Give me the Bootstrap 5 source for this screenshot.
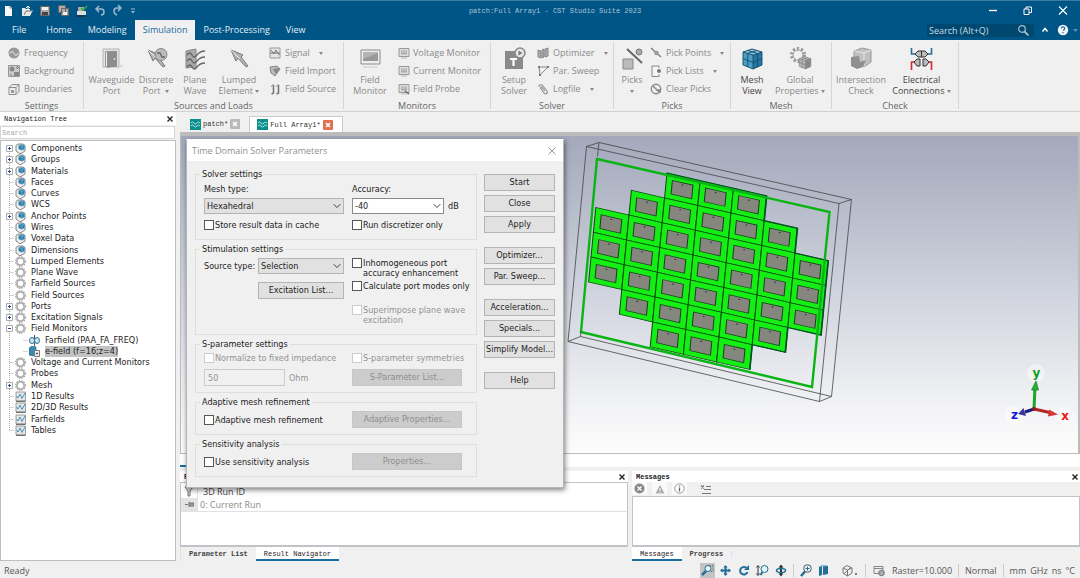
<!DOCTYPE html>
<html lang="en">
<head>
<meta charset="utf-8">
<meta name="viewport" content="width=device-width, initial-scale=1">
<title>patch:Full Array1 - CST Studio Suite 2023</title>
<link href="https://cdn.jsdelivr.net/npm/bootstrap@5.3.0/dist/css/bootstrap.min.css" rel="stylesheet">
<style>
:root{--ui:"Open Sans","Noto Sans",sans-serif;--tahoma:"DejaVu Sans Condensed","DejaVu Sans",sans-serif;--sim:"Liberation Mono",monospace;--blue:#005587}
body{font:9px/12px var(--ui);background:#f0f0f0;color:#444;height:100vh;overflow:hidden}
button,input,select{font:inherit;color:inherit}
button{background:none;border:0;padding:0}
svg{display:block;flex:none}
.i12{width:12px;height:12px}
.i22{width:23px;height:23px}
.mono{font:7px/10px var(--sim)}
.topbar{background:var(--blue);color:#fff;border-top:1px solid #3c7ba3}
.titlerow{height:19px}
.doc-title{color:#a9c4d6;width:230px;padding-left:30px}
.winbtns{gap:24px;padding-right:5px}
.tabrow{height:20px}
.rtab{padding:0 8px;line-height:20px;color:#e4eef4;text-decoration:none}
.rtab.active{background:#f0f0f0;color:#1a6a9c}
.rsearch{width:107px;height:13px;background:#00486f}
.rsearch input{background:none;border:0;color:#c6dbe8;padding:0 2px;width:90px;height:13px}
.rsearch input::placeholder{color:#c6dbe8;opacity:1}
.ribbon{height:72px;border-bottom:1px solid #d0d0d0;background:#f0f0f0;color:#8a8a8a}
.rgroup{border-right:1px solid #d6d6d6;margin:2px 0}
.rgroup .items{height:58px;padding-top:2px;align-items:flex-start}
.rgroup .caption{line-height:12px;text-align:center;color:#666}
.big{line-height:11px;white-space:nowrap;color:inherit}
.big svg{margin:3px auto 4px}
.small-btn{height:18px;color:inherit;white-space:nowrap}
.on{color:#444}
.caret{display:inline-block;border:2px solid transparent;border-top:3px solid #888;border-bottom:0;vertical-align:middle}
.small-btn .caret{margin-left:5px}
.workspace{min-height:0}
.nav-side{width:176px;background:#f0f0f0}
.phead{height:13px;background:#fff;color:#222}
.tree{background:#fff;border:1px solid #bdbdc2;font:9px/11px var(--tahoma);color:#222;margin-top:1px}
.tree-search{height:13px;border:1px solid #d6d6d6;background:#fff;width:175px;padding:0 1px;margin-top:1px}
.tree-search::placeholder{color:#aaa;opacity:1}
.tree ul{height:293px;margin:2px 0 0;position:relative}
.tree li{flex:1 1 0;min-height:0;padding-left:4px}
.tree .tw{width:9px;height:9px;margin-right:1px}
.tree .ic{width:11px;height:11px;margin-right:5px}
.tree .sub{padding-left:18px}
.tree .selrow span{background:#c3c3c3}
.trunk{border-left:1px dotted #aaa;position:absolute;left:8px;top:6px;bottom:6px}
.main{min-width:0}
.dtabs{height:20px;padding:4px 0 0 6px}
.dtab{height:16px;padding:0 9px 0 7px;gap:2px;color:#333}
.dtab.active{background:#fff;border:1px solid #ccc;border-bottom:0}
.dtab svg{width:11px;height:11px}
.x{width:10px;height:10px;border-radius:1px;background:#b9b9b9}
.x.red{background:#e07050}
.view3d{height:322px;border:solid #bcbcbc;border-width:4px 2px 1px 1px;background:linear-gradient(#a3a9bb,#c9cdd9 42%,#eff0f3 82%,#fdfdfd)}
.viewtabs{height:13px;background:#fff;margin-bottom:4px}
.viewtabs span{display:block;width:60px;height:100%;border-bottom:2px solid #1b6f9f}
.outputs{gap:4px}
.outbox{background:#fff;border:2px solid #c2c3c9;border-width:1px 1px 2px}
.btab{height:14px;line-height:14px;padding:0 8px;color:#444;font-size:7px;font-family:var(--sim);font-weight:bold}
.btab.active{background:#fff;border-bottom:2px solid #1b6f9f;font-weight:normal;color:#222}
.filtercol{width:17px}
.statusbar{height:17px;color:#555;padding:2px 5px 0 4px}
.statusbar .sep{border-left:1px solid #ccc;height:13px}
.mtool{width:15px;height:13px;background:#fafafa}
.solver{position:absolute;left:186px;top:139px;width:378px;background:#f0f0f0;box-shadow:1px 2px 5px rgba(0,0,0,.5);font:9px/12px var(--tahoma);color:#222;border:1px solid #b5b5b8;border-top-color:#fff}
.solver .bar{height:21px;background:#fff;color:#909090;font:9px/20px var(--ui);padding:0 7px 0 5px}
.solver .cols{padding:7px 8px 10px}
.solver fieldset{border:1px solid #dedede;width:282px;padding:0 8px 6px;margin:0 0 3px;min-width:0}
.solver fieldset.roomy{padding-bottom:9px}
.solver legend{float:none;width:auto;font-size:9px;line-height:12px;margin:0 0 0 -4px;padding:0 2px}
.two{display:grid;grid-template-columns:140px 1fr;column-gap:8px}
.pb{height:17px;border:1px solid #b4b4b4;background:#e1e1e1;color:#222;text-align:center;line-height:13px;width:71px}
.pb.w{width:86px}.pb.d{width:110px;background:#cccccc;border-color:#c6c6c6;color:#8e8e8e}
.pbs{padding-top:6px}
.pb.last{margin-bottom:10px}
.solver .form-select{height:16px;border-radius:0;padding:0 14px 0 2px;font-size:9px;line-height:14px;border:1px solid #b4b4b4;background-color:#e1e1e1;background-size:8px;background-position:right 2px center;color:#222}
.solver .form-select.white{background-color:#fff;border-color:#8a8a8a}
.ck{margin:0;padding:0;min-height:0;display:flex;align-items:center;line-height:10px;gap:1px;white-space:nowrap}
.ck .form-check-input{float:none;margin:0;width:10px;height:10px;border-radius:0;border:1px solid #555;flex:none}
.ck .form-check-input:disabled{opacity:1;border-color:#ccc}
.ck .form-check-input:disabled~.form-check-label,.off{opacity:1;color:#939393}
.imp{width:81px;height:17px;border:1px solid #ccc;background:#f0f0f0;color:#939393;padding:0 3px}
.g12{padding-top:3px}
.gapped{padding-top:14px}
</style>
</head>
<body class="d-flex flex-column">
<svg width="0" height="0" class="position-absolute" aria-hidden="true">
<defs>
<symbol id="cube" viewBox="0 0 11 11"><path d="M1 2.500 3 1h5l2 1.500V8L6 10.500H4.500L1 8z" fill="#eee" stroke="#777" stroke-width=".9"/><path d="M3.500 2.500 6 1.500l3.500.5v4L7 7.500 3.500 6z" fill="#2a80ab"/><path d="M3.500 2.500 7 3.200l2.500-1M7 3.200v4" stroke="#8cc5e0" stroke-width=".6" fill="none"/></symbol>
<symbol id="gear" viewBox="0 0 11 11"><circle cx="5.500" cy="5.500" r="4.700" fill="none" stroke="#8f8f8f" stroke-width="1.200" stroke-dasharray="1.400 1.060"/><circle cx="5.500" cy="5.500" r="3.600" fill="#fff" stroke="#b0b0b0" stroke-width="1.700"/></symbol>
<symbol id="plot" viewBox="0 0 11 11"><path d="M1 1h9.500v9H1z" fill="#e6e9ea" stroke="#888" stroke-width=".8"/><path d="M1.500 5 3 7l2-4 2 4.500L10 2" fill="none" stroke="#3b88ae" stroke-width=".9"/><path d="M1 10.300h9.500" stroke="#555"/></symbol>
<symbol id="plus" viewBox="0 0 9 9"><path d="M1.500 1.500h6v6h-6z" fill="#fff" stroke="#aaa"/><path d="M3 4.500h3M4.500 3v3" stroke="#2a4a9a"/></symbol>
<symbol id="minus" viewBox="0 0 9 9"><path d="M1.500 1.500h6v6h-6z" fill="#fff" stroke="#aaa"/><path d="M3 4.500h3" stroke="#2a4a9a"/></symbol>
<symbol id="stub" viewBox="0 0 9 9"><path d="M4.500 4.500H9" stroke="#aaa" stroke-dasharray="1 1"/></symbol>
<symbol id="cst" viewBox="0 0 11 11"><path d="M0 0h11v11H0z" fill="#0b8d8c"/><path d="M1 4q1.500-2 3 0t3 0 3 0M1 7q1.500-2 3 0t3 0 3 0" fill="none" stroke="#c9ecea" stroke-width=".9"/></symbol>
<symbol id="xx" viewBox="0 0 10 10"><path d="M3 3l4 4M7 3 3 7" stroke="#fff" stroke-width="1.600"/></symbol>
<symbol id="close" viewBox="0 0 8 8"><path d="M1.500 1.500l5 5M6.500 1.500l-5 5" stroke="#222" stroke-width="1.400"/></symbol>
<symbol id="arrow" viewBox="0 0 23 23"><path d="M3 3l5 11 2-3 8 9 2-1-7-9 2-2z" fill="#b5b5b5" stroke="#777"/><path d="M3 3l9 9" stroke="#eee"/></symbol>
<symbol id="mon" viewBox="0 0 12 12"><path d="M1 1.500h10v8H1z" fill="#ddd" stroke="#999"/><path d="M3 3.500h6v4H3z" fill="#aaa"/><path d="M3.500 6l2-1.500 1 1 2-1" fill="none" stroke="#eee" stroke-width=".7"/><path d="M3 11h6" stroke="#bbb"/></symbol>
<symbol id="bigcube" viewBox="0 0 23 23"><path d="M2 5l9-3 10 3v13l-9 4-10-4z" fill="var(--a)"/><path d="M2 5l10 3 9-3-10-3z" fill="var(--c)"/><path d="M12 8l9-3v13l-9 4z" fill="var(--b)"/><path d="M2 5l10 3v14M12 8l9-3M2 11.500l10 4 9-4M6.700 6.500V20M16.500 6.500V20M6.500 3.500l10 3M16 3.500l-9.500 3M2 5v13l10 4 9-4V5l-10-3z" fill="none" stroke="var(--s)" stroke-width=".9"/></symbol>
</defs></svg>

<header class="topbar">
 <div class="titlerow d-flex align-items-center position-relative">
  <svg width="135" height="16" viewBox="0 0 135 16" class="ms-1" aria-hidden="true">
   <path d="M1 3h5l2 2v8H1z" fill="#f7f7f7"/><path d="M6 3v2h2" fill="none" stroke="#888"/>
   <path d="M18 5h3l1 1h4v2l3-1-3 6h-8z" fill="#e8e8e8"/><path d="M24 7V3m-2 2 2-2 2 2" stroke="#fff" fill="none"/><path d="M20 12l2-4h7" stroke="#777" fill="none"/>
   <path d="M36.500 3.500h9v9h-9z" fill="#aaa" stroke="#666"/><path d="M38 4h6v3h-6z" fill="#eee"/><path d="M38 9h6v3h-6z" fill="#444"/>
   <path d="M54.500 2.500h7v7h-7zM57.500 5.500h7v7h-7z" fill="#aaa" stroke="#666"/><path d="M59 9h4v3h-4z" fill="#eee"/>
   <path d="M73 8h9v4h-9z" fill="#ddd"/><path d="M74 4h6v4h-6z" fill="#aaa"/><path d="M72 13h10" stroke="#222"/><path d="M77 5l2 2 4-4" fill="none" stroke="#2faa3c" stroke-width="1.600"/>
   <path d="M93 6h4q3 0 3 3t-3 3M95 3l-3 3 3 3" fill="none" stroke="#9db9ca" stroke-width="1.500"/>
   <path d="M116 5h-3q-3 0-3 3t3 4M114 2l3 3-3 3" fill="none" stroke="#9db9ca" stroke-width="1.500"/>
   <path d="M127 6h4" stroke="#9db9ca"/><path d="M127 8h4l-2 2.500z" fill="#9db9ca"/>
  </svg>
  <div class="mono doc-title text-center position-absolute start-50 translate-middle-x">patch:Full Array1 - CST Studio Suite 2023</div>
  <div class="ms-auto d-flex winbtns">
   <button aria-label="Minimize"><svg width="11" height="11"><path d="M2 5.500h8" stroke="#fff" stroke-width="1.400"/></svg></button>
   <button aria-label="Restore"><svg width="11" height="11"><path d="M2 4h5v5.500H2zM4 4V2h5.500v5.500H7" fill="none" stroke="#fff"/></svg></button>
   <button aria-label="Close"><svg width="18" height="11"><path d="M2 1.500l8 8M10 1.500l-8 8" stroke="#fff" stroke-width="1.100"/></svg></button>
  </div>
 </div>
 <nav class="tabrow d-flex align-items-center">
  <a class="rtab ms-1 me-1" href="#">File</a><a class="rtab" href="#">Home</a><a class="rtab" href="#">Modeling</a><a class="rtab active" href="#">Simulation</a><a class="rtab" href="#">Post-Processing</a><a class="rtab" href="#">View</a>
  <div class="rsearch d-flex align-items-center ms-auto"><input type="text" aria-label="Search" placeholder="Search (Alt+Q)"><svg width="12" height="12"><circle cx="5" cy="5" r="3.300" fill="none" stroke="#a9bfcc" stroke-width="1.200"/><path d="M7.500 7.500l4 4" stroke="#a9bfcc" stroke-width="1.800"/></svg></div>
  <svg width="46" height="14" aria-hidden="true"><path d="M8.500 8.500l2.500-3 2.500 3" fill="none" stroke="#fff" stroke-width="1.500"/><circle cx="29" cy="7" r="5.200" fill="#f3f6f8"/><path d="M27.300 5.500q0-1.700 1.700-1.700t1.700 1.500-1.700 2.200M29 9v1.300" fill="none" stroke="#1a6a9c" stroke-width="1.200"/><path d="M39 6h5l-2.500 3z" fill="#5d90b0"/></svg>
 </nav>
</header>

<section class="ribbon d-flex" aria-label="Simulation ribbon">
 <div class="rgroup" style="width:84px"><div class="items ps-2">
  <button class="small-btn d-flex align-items-center gap-1"><svg class="i12"><circle cx="6" cy="6" r="5.500" fill="#999"/><path d="M2 6.500q2-4 4 0t4-.5" fill="none" stroke="#e8e8e8"/></svg>Frequency</button>
  <button class="small-btn d-flex align-items-center gap-1"><svg class="i12"><path d="M.5.5h11v11H.5z" fill="#ccc" stroke="#999"/><circle cx="4" cy="4" r="2.500" fill="#888"/><path d="M6 7h5v4H6z" fill="#888"/><path d="M8 2l2 2M2 9l2 2M9 1l2 2" stroke="#777"/></svg>Background</button>
  <button class="small-btn d-flex align-items-center gap-1"><svg class="i12"><path d="M1 4.500h7v7H1zM1 4.500l3-3h7v7l-3 3M8 4.500l3-3" fill="#eee" stroke="#8d8d8d"/><path d="M3 7h3v3H3z" fill="#999"/></svg>Boundaries</button>
 </div><div class="caption">Settings</div></div>

 <div class="rgroup" style="width:260px"><div class="items d-flex" style="padding-left:4px">
  <button class="big" style="width:47px"><svg class="i22"><path d="M3 2h16v18H3z" fill="#e4e4e4" stroke="#b5b5b5"/><path d="M5.500 4.500h11v15h-11z" fill="#eee" stroke="#999"/><path d="M7 5l10-1v15L7 21z" fill="#8d8d8d"/><circle cx="14.500" cy="12" r="1" fill="#ddd"/><path d="M18 21l5-3" stroke="#d8d8d8" stroke-width="2"/></svg>Waveguide<br>Port</button>
  <button class="big" style="width:42px"><svg class="i22"><use href="#arrow"/><circle cx="16" cy="7.500" r="6" fill="#bbb" stroke="#888"/><path d="M12 6h3l2 4h3" fill="none" stroke="#666" stroke-width="1.300"/></svg>Discrete<br>Port&nbsp; <i class="caret"></i></button>
  <button class="big" style="width:36px"><svg class="i22"><path d="M2 4l10-2v18L2 21z" fill="#aaa" stroke="#888"/><path d="M3 8q3-4 5 0t5 0 8-4M3 14q3-4 5 0t5 0 8-4M3 20q3-4 5 0t5 0 8-4" fill="none" stroke="#666" stroke-width="1.300"/></svg>Plane<br>Wave</button>
  <button class="big" style="width:52px"><svg class="i22"><use href="#arrow"/></svg>Lumped<br>Element <i class="caret"></i></button>
  <div class="ps-1">
   <button class="small-btn d-flex align-items-center gap-1"><svg class="i12"><path d="M1 1h10v10H1z" fill="#e4e4e4" stroke="#999"/><path d="M2 3l3 4 2-4 3 5M1 6h10" fill="none" stroke="#777"/></svg>Signal <i class="caret"></i></button>
   <button class="small-btn d-flex align-items-center gap-1"><svg class="i12"><path d="M1 2l7-1 3 3-5 7-4-3z" fill="#bbb" stroke="#888"/><path d="M4 4l7-1-4 6z" fill="#888"/></svg>Field Import</button>
   <button class="small-btn d-flex align-items-center gap-1"><svg class="i12"><path d="M4.500 2v8l-2 1M9.500 2v8l-2 1" fill="none" stroke="#777" stroke-width="1.600"/><path d="M2 4l2.500-3M7 4l2.500-3" stroke="#999"/></svg>Field Source</button>
  </div>
 </div><div class="caption">Sources and Loads</div></div>

 <div class="rgroup" style="width:147px"><div class="items d-flex" style="padding-left:5px">
  <button class="big" style="width:42px"><svg class="i22"><path d="M2 3h19v14H2z" fill="#eee" stroke="#8a8a8a"/><path d="M4 5h15v9H4z" fill="#b5b5b5"/><path d="M4 12 19 6v8H4z" fill="#999"/><path d="M4 20h15" stroke="#ddd" stroke-width="2"/></svg>Field<br>Monitor</button>
  <div style="padding-left:7px">
   <button class="small-btn d-flex align-items-center" style="gap:3px"><svg class="i12"><use href="#mon"/></svg>Voltage Monitor</button>
   <button class="small-btn d-flex align-items-center" style="gap:3px"><svg class="i12"><use href="#mon"/></svg>Current Monitor</button>
   <button class="small-btn d-flex align-items-center" style="gap:3px"><svg class="i12"><use href="#mon"/><path d="M7 8l4 3" stroke="#666" stroke-width="1.500"/></svg>Field Probe</button>
  </div>
 </div><div class="caption">Monitors</div></div>

 <div class="rgroup" style="width:123px"><div class="items d-flex">
  <button class="big" style="width:46px"><svg class="i22"><path d="M2 4h18v18H2z" fill="#8a8a8a"/><path d="M7 12h7M10.500 12v7" stroke="#fff" stroke-width="2.200"/><circle cx="17" cy="6" r="5" fill="#e8e8e8" stroke="#888" stroke-width="1.500"/><path d="M15.500 3.500l4 2.500-4 2.500z" fill="#777"/></svg>Setup<br>Solver</button>
  <div>
   <button class="small-btn d-flex align-items-center gap-1"><svg class="i12"><path d="M1 3l3 1v7l-3-1zM5 3l2-1v8l-2 1zM8 2l3-1v8l-3 1z" fill="#aaa" stroke="#888"/></svg>Optimizer <i class="caret"></i></button>
   <button class="small-btn d-flex align-items-center gap-1"><svg class="i12"><path d="M2 2h9L3 10z" fill="none" stroke="#888"/><path d="M1 1h2v2H1zM10 1h2v2h-2zM2 9h2v2H2z" fill="#777"/></svg>Par. Sweep</button>
   <button class="small-btn d-flex align-items-center gap-1"><svg class="i12"><path d="M2 4q0-3 3-2l5 6q1 2-1 3-1 0-2-1L3.500 5l1-1 3.500 4" fill="none" stroke="#8a8a8a" stroke-width="1.100"/></svg>Logfile <i class="caret"></i></button>
  </div>
 </div><div class="caption">Solver</div></div>

 <div class="rgroup" style="width:117px"><div class="items d-flex">
  <button class="big" style="width:36px"><svg class="i22"><path d="M6 2l15 14" stroke="#666" stroke-width="2"/><circle cx="18" cy="5" r="3" fill="#aaa" stroke="#777"/><path d="M2 12h10v10H2z" fill="#bbb" stroke="#888"/></svg>Picks<br><i class="caret"></i></button>
  <div>
   <button class="small-btn d-flex align-items-center gap-1"><svg class="i12"><path d="M1 1l10 9" stroke="#777" stroke-width="1.200"/><circle cx="6.500" cy="6" r="2.300" fill="#999"/></svg>Pick Points <i class="caret"></i></button>
   <button class="small-btn d-flex align-items-center gap-1"><svg class="i12"><path d="M2 1h7v10.500H2z" fill="#f5f5f5" stroke="#888"/><path d="M9 3v6" stroke="#fff" stroke-width="2"/><circle cx="9" cy="6" r="2" fill="#777"/></svg>Pick Lists <i class="caret"></i></button>
   <button class="small-btn d-flex align-items-center gap-1"><svg class="i12"><circle cx="6" cy="6" r="4.700" fill="#eee" stroke="#888" stroke-width="1.400"/><path d="M3 3l6 6M6 7h4v3" stroke="#888" stroke-width="1.400" fill="none"/></svg>Clear Picks</button>
  </div>
 </div><div class="caption">Picks</div></div>

 <div class="rgroup" style="width:101px"><div class="items d-flex">
  <button class="big on" style="width:42px"><svg class="i22" style="--a:#4b9ec6;--b:#2477a3;--c:#8cc8e4;--s:#184d6b"><use href="#bigcube"/></svg>Mesh<br>View</button>
  <button class="big" style="width:54px"><svg class="i22" style="--a:#b5b5b5;--b:#8f8f8f;--c:#ccc;--s:#777"><circle cx="9" cy="8" r="6.500" fill="#f5f5f5" stroke="#999" stroke-width="3" stroke-dasharray="2.200 1.900"/><circle cx="9" cy="8" r="5" fill="#f0f0f0" stroke="#999"/><use href="#bigcube" x="9" y="8" width="14" height="15"/></svg>Global<br>Properties <i class="caret"></i></button>
 </div><div class="caption">Mesh</div></div>

 <div class="rgroup" style="width:127px"><div class="items d-flex">
  <button class="big" style="width:58px"><svg class="i22"><path d="M4 4l8-3 9 2v12l-7 5-10-3z" fill="#c0c0c0" stroke="#999"/><path d="M4 4l10 2 7-3M14 6v14" fill="none" stroke="#e8e8e8"/><path d="M1 10l8-1 1 6 6-2-3 7-6 2-6-3z" fill="#8f8f8f"/></svg>Intersection<br>Check</button>
  <button class="big on" style="width:63px"><svg class="i22"><path d="M1.500 1v6h5M21.500 1v6h-5" fill="none" stroke="#246f97" stroke-width="1.600"/><path d="M1.500 23v-8h5M21.500 23v-8h-5" fill="none" stroke="#cf2a2a" stroke-width="1.600"/><path d="M5 7l3-3h7l3 3-3 3H8zM4 15l3-3h3v7H7zM13 12h3l3 3-3 4h-3z" fill="#bbb" stroke="#333"/><path d="M11.500 4v6" stroke="#333"/></svg>Electrical<br>Connections <i class="caret"></i></button>
 </div><div class="caption">Check</div></div>
</section>

<div class="workspace d-flex flex-fill gap-1">
 <aside class="nav-side d-flex flex-column">
  <div class="phead d-flex align-items-center justify-content-between mono"><span class="ps-1">Navigation Tree</span><button aria-label="Close tree"><svg width="10" height="8"><use href="#close" width="8"/></svg></button></div>
  <input class="tree-search mono" type="text" aria-label="Search tree" placeholder="Search">
  <div class="tree flex-fill">
   <ul class="list-unstyled d-flex flex-column" id="tree"><li class="trunk p-0"></li></ul>
  </div>
 </aside>

 <main class="main d-flex flex-column flex-fill">
  <div class="dtabs d-flex align-items-end mono">
   <div class="dtab d-flex align-items-center ps-1"><svg><use href="#cst"/></svg><span>patch*</span><button class="x" aria-label="Close patch"><svg class="w-100 h-100"><use href="#xx"/></svg></button></div>
   <div class="dtab active d-flex align-items-center"><svg><use href="#cst"/></svg><span>Full Array1*</span><button class="x red" aria-label="Close Full Array1"><svg class="w-100 h-100"><use href="#xx"/></svg></button></div>
  </div>
  <div class="view3d">
   <svg width="100%" height="100%" viewBox="181 136 897 317" preserveAspectRatio="xMinYMin meet" role="img" aria-label="Patch array model">
    <defs>
     <g id="cell" stroke="#064d06" stroke-width=".03"><path d="M0 0h1v1H0z" fill="#14ee14"/><path d="M.18 .24h.62v.55H.18z" fill="#85877f" stroke="#1d3d1d"/><circle cx=".49" cy=".33" r=".025" fill="#222" stroke="none"/></g>
     <g id="r3"><use href="#cell" x="2"/><use href="#cell" x="3"/><use href="#cell" x="4"/></g>
     <g id="r5"><use href="#cell" x="1"/><use href="#r3"/><use href="#cell" x="5"/></g>
     <g id="r7"><use href="#cell" x="0"/><use href="#r5"/><use href="#cell" x="6"/></g>
    </defs>
    <g transform="matrix(33.2 7.6 -2.4 24.8 600.6 157.9)">
     <use href="#r3"/><use href="#r5" y="1"/><use href="#r7" y="2"/><use href="#r7" y="3"/><use href="#r7" y="4"/><use href="#r5" y="5"/><use href="#r3" y="6"/>
     <path d="M2 0h3v1h1v1h1v3H6v1H5v1" fill="none" stroke="#052" stroke-width=".05"/>
    </g>
    <path d="M597 159l232.500 53-17.500 175-231-55z" fill="none" stroke="#0ab414" stroke-width="2.400"/>
    <path d="M586.500 146.500 839 203.500l-19.500 198L568 341.500zM599 142.500l252.500 57-20 197L580.500 336.500l.5-5M586.500 146.500l12.500-4-1.500 14M839 203.500l12.500-4M819.500 401.500l12-5M568 341.500l12.500-5" fill="none" stroke="#444" stroke-width=".8"/>
    <g fill="#fff" opacity=".45"><circle cx="1036" cy="373" r="9"/><circle cx="1014" cy="415" r="9"/><circle cx="1065" cy="416" r="9"/></g>
    <path d="M1034 409l1-22" stroke="#1ba62a" stroke-width="3"/><path d="M1036 381l-4.500 9h7z" fill="#22b832" stroke="#175f1c" stroke-width=".6"/>
    <path d="M1034 409l18 4" stroke="#b22626" stroke-width="3"/><path d="M1058 414.500l-9-5-1 7z" fill="#d23a3a"/>
    <path d="M1034 409l-9 3" stroke="#1c1c80" stroke-width="3"/><path d="M1018 414l5.500-6 2.500 8z" fill="#35359a"/><circle cx="1034" cy="409" r="2" fill="#8b2020"/>
    <g font-family="DejaVu Sans" font-weight="bold" font-size="12" text-anchor="middle"><text x="1036.500" y="377" fill="#0a9e1c">y</text><text x="1014.500" y="419" fill="#1414dd">z</text><text x="1065" y="420" fill="#f01414">x</text></g>
   </svg>
  </div>
  <div class="viewtabs"><span></span></div>
  <div class="outputs d-flex flex-fill">
   <section class="d-flex flex-column" style="flex:448 1 0">
    <div class="phead d-flex align-items-center justify-content-between mono" style="height:11px"><b class="ps-1">Result</b><button aria-label="Close results"><svg width="10" height="8"><use href="#close" width="8"/></svg></button></div>
    <div class="outbox flex-fill">
     <div class="d-flex" style="height:15px;line-height:17px"><span class="filtercol border-end d-flex"><svg width="12" height="15" class="mx-auto"><path d="M2 4h8L7 8v5H5V8z" fill="#ddd" stroke="#777"/></svg></span><span style="padding-left:5px">3D Run ID</span></div>
     <div class="d-flex border-bottom" style="height:14px;line-height:14px;color:#8a8a8a"><span class="filtercol d-flex align-items-center justify-content-center" style="background:#e3e3e3"><svg width="9" height="7"><path d="M0 3.500h3M4 1v5M4 2h5v3H4" fill="#999" stroke="#777"/></svg></span><span style="padding-left:2px">0: Current Run</span></div>
    </div>
    <div class="d-flex"><div class="btab border-start">Parameter List</div><div class="btab active">Result Navigator</div></div>
   </section>
   <section class="d-flex flex-column" style="flex:448 1 0">
    <div class="phead d-flex align-items-center justify-content-between mono" style="height:11px"><b class="ps-1">Messages</b><button aria-label="Close messages"><svg width="10" height="8"><use href="#close"/></svg></button></div>
    <div class="d-flex" style="height:14px;gap:5px">
     <button class="mtool d-flex align-items-center justify-content-center" aria-label="Errors"><svg width="11" height="11"><circle cx="5.500" cy="5.500" r="5" fill="#888"/><path d="M3.500 3.500l4 4M7.500 3.500l-4 4" stroke="#fff" stroke-width="1.300"/></svg></button>
     <button class="mtool d-flex align-items-center justify-content-center" aria-label="Warnings"><svg width="10" height="10"><path d="M5 1l4.500 8.500h-9z" fill="#aaa"/><path d="M5 4v3M5 8v1" stroke="#fff"/></svg></button>
     <button class="mtool d-flex align-items-center justify-content-center" aria-label="Info"><svg width="11" height="11"><circle cx="5.500" cy="5.500" r="4.700" fill="#fff" stroke="#999"/><path d="M5.500 2.500v1M5.500 4.500v4" stroke="#666" stroke-width="1.300"/></svg></button>
     <button class="ms-2" aria-label="Clear messages"><svg width="12" height="11"><path d="M4 5.500h7M6 2.500h5M2 9.500h9M1 1.500l3 3M4 1.500l-3 3" stroke="#777" stroke-width="1.100"/></svg></button>
    </div>
    <div class="outbox flex-fill"></div>
    <div class="d-flex"><div class="btab active">Messages</div><div class="btab">Progress</div><div class="border-start my-1"></div></div>
   </section>
  </div>
 </main>
</div>

<footer class="statusbar d-flex align-items-center">
 <span>Ready</span>
 <div class="ms-auto d-flex align-items-center" style="gap:6px">
  <svg width="186" height="15" viewBox="0 0 186 15" aria-hidden="true">
   <path d="M0 0h15v15H0z" fill="#c3c3c3"/><path d="M2 12l4-4" stroke="#246f97" stroke-width="2.500"/><circle cx="8" cy="5.500" r="3" fill="#e6f2f8" stroke="#246f97"/><path d="M8 2.500h5v6h-3" fill="none" stroke="#555" stroke-dasharray="1 1"/>
   <path d="M21 7.500h9M25.500 3v9" stroke="#246f97" stroke-width="2.200"/><path d="M20 7.500l2.500-2v4zM31 7.500l-2.500-2v4zM25.500 2l-2 2.500h4zM25.500 13l-2-2.500h4z" fill="#246f97"/>
   <path d="M47 5.500A3.800 3.800 0 1 0 47.500 9" fill="none" stroke="#246f97" stroke-width="2"/><path d="M49 2v5h-5z" fill="#246f97"/>
   <path d="M58 3v9M56.500 4.500 58 2.500l1.500 2M56.500 10.500l1.500 2 1.500-2" fill="none" stroke="#333"/><circle cx="64.500" cy="6" r="3.500" fill="#e6f2f8" stroke="#246f97"/><path d="M60.500 12l2-3" stroke="#246f97" stroke-width="2"/>
   <path d="M81 1.500l2.500 3H82v6h1.500l-2.500 3-2.500-3H80v-6h-1.500z" fill="#333"/><ellipse cx="81" cy="7.500" rx="4.500" ry="2" fill="none" stroke="#246f97" stroke-width="1.500"/>
   <path d="M93.500 1v13" stroke="#ccc"/><path d="M101 13l4-4.500" stroke="#246f97" stroke-width="2.500"/><circle cx="107.500" cy="5.500" r="3.800" fill="#e6f2f8" stroke="#555"/><path d="M105.500 5.500h4M107.500 3.500v4" stroke="#246f97"/>
   <path d="M119 4l3-2v10l-3 1zM123 3h5v8l-5 1z" fill="#246f97"/><path d="M119 4l3-2h6l-3 1.500z" fill="#7fb8d4"/>
   <path d="M143 5l4-2.500L152 5v5l-4.500 3-4.500-3zM143 5l4.500 2L152 5M147.500 7v6M144 11l7-7" fill="none" stroke="#777"/><path d="M155 11h2" stroke="#555" stroke-width="1.500"/>
   <path d="M165.500 1v13" stroke="#ccc"/><path d="M174 3.500h9v7h-9zM174 5.500h9" fill="#eee" stroke="#888"/><circle cx="181.500" cy="10" r="2.800" fill="#aaa" stroke="#777"/>
  </svg>
  <span>Raster=10.000</span><span class="sep"></span><span>Normal</span><span class="sep"></span><span class="d-flex gap-1"><span>mm</span><span>GHz</span><span>ns</span><span>°C</span></span>
 </div>
</footer>

<form class="solver" aria-label="Time Domain Solver Parameters">
 <div class="bar d-flex align-items-center justify-content-between"><span>Time Domain Solver Parameters</span><button type="button" aria-label="Close dialog"><svg width="8" height="8"><path d="M.5.5l7 7M7.500.5l-7 7" stroke="#888" stroke-width=".9"/></svg></button></div>
 <div class="cols d-flex justify-content-between">
  <div>
   <fieldset class="roomy"><legend>Solver settings</legend>
    <div class="two g12" style="row-gap:3px">
     <label for="mt">Mesh type:</label><label for="acc">Accuracy:</label>
     <select class="form-select" id="mt"><option>Hexahedral</option></select>
     <div class="d-flex align-items-center gap-1"><select class="form-select white" id="acc" style="width:92px"><option>-40</option></select><span>dB</span></div>
     <div class="form-check ck g12"><input class="form-check-input" type="checkbox" id="c1"><label class="form-check-label" for="c1">Store result data in cache</label></div>
     <div class="form-check ck g12"><input class="form-check-input" type="checkbox" id="c2"><label class="form-check-label" for="c2">Run discretizer only</label></div>
    </div>
   </fieldset>
   <fieldset class="roomy"><legend>Stimulation settings</legend>
    <div class="two g12">
     <div><div class="d-flex align-items-center justify-content-between"><label for="st">Source type:</label><select class="form-select" id="st" style="width:86px"><option>Selection</option></select></div><button type="button" class="pb w d-block ms-auto mt-2">Excitation List...</button></div>
     <div>
      <div class="form-check ck align-items-start"><input class="form-check-input" type="checkbox" id="c3"><label class="form-check-label" for="c3">Inhomogeneous port<br>accuracy enhancement</label></div>
      <div class="form-check ck g12"><input class="form-check-input" type="checkbox" id="c4"><label class="form-check-label" for="c4">Calculate port modes only</label></div>
      <div class="form-check ck align-items-start gapped"><input class="form-check-input" type="checkbox" id="c5" disabled><label class="form-check-label" for="c5">Superimpose plane wave<br>excitation</label></div>
     </div>
    </div>
   </fieldset>
   <fieldset><legend>S-parameter settings</legend>
    <div class="two g12" style="row-gap:6px">
     <div class="form-check ck"><input class="form-check-input" type="checkbox" id="c6" disabled><label class="form-check-label" for="c6">Normalize to fixed impedance</label></div>
     <div class="form-check ck"><input class="form-check-input" type="checkbox" id="c7" disabled><label class="form-check-label" for="c7">S-parameter symmetries</label></div>
     <div class="d-flex align-items-center gap-1"><input class="imp" id="imp" value="50" disabled><label class="off" for="imp">Ohm</label></div>
     <button type="button" class="pb d" disabled>S-Parameter List...</button>
    </div>
   </fieldset>
   <fieldset><legend>Adaptive mesh refinement</legend>
    <div class="two g12">
     <div class="form-check ck"><input class="form-check-input" type="checkbox" id="c8"><label class="form-check-label" for="c8">Adaptive mesh refinement</label></div>
     <button type="button" class="pb d" disabled>Adaptive Properties...</button>
    </div>
   </fieldset>
   <fieldset class="mb-0"><legend>Sensitivity analysis</legend>
    <div class="two g12">
     <div class="form-check ck"><input class="form-check-input" type="checkbox" id="c9"><label class="form-check-label" for="c9">Use sensitivity analysis</label></div>
     <button type="button" class="pb d" disabled>Properties...</button>
    </div>
   </fieldset>
  </div>
  <div class="d-flex flex-column gap-1 pbs">
   <button type="button" class="pb">Start</button><button type="button" class="pb">Close</button><button type="button" class="pb last">Apply</button>
   <button type="button" class="pb">Optimizer...</button><button type="button" class="pb last">Par. Sweep...</button>
   <button type="button" class="pb">Acceleration...</button><button type="button" class="pb">Specials...</button><button type="button" class="pb last">Simplify Model...</button>
   <button type="button" class="pb">Help</button>
  </div>
 </div>
</form>

<script src="https://cdn.jsdelivr.net/npm/bootstrap@5.3.0/dist/js/bootstrap.bundle.min.js"></script>
<script>
const rows=[['plus','cube','Components'],['plus','cube','Groups'],['plus','cube','Materials'],['stub','cube','Faces'],['stub','cube','Curves'],['stub','cube','WCS'],['plus','cube','Anchor Points'],['stub','cube','Wires'],['stub','cube','Voxel Data'],['stub','cube','Dimensions'],['stub','gear','Lumped Elements'],['stub','gear','Plane Wave'],['stub','gear','Farfield Sources'],['stub','gear','Field Sources'],['plus','gear','Ports'],['plus','gear','Excitation Signals'],['minus','gear','Field Monitors'],['stub','far','Farfield (PAA_FA_FREQ)','sub'],['stub','ef','e-field (f=16;z=4)','sub selrow'],['stub','gear','Voltage and Current Monitors'],['stub','gear','Probes'],['plus','gear','Mesh'],['stub','plot','1D Results'],['stub','plot','2D/3D Results'],['stub','plot','Farfields'],['stub','plot','Tables']];
const own={far:'<path d="M5.500 0v11" stroke="#555"/><ellipse cx="3" cy="5.500" rx="2.500" ry="3" fill="#cfe5ef" stroke="#246f97"/><ellipse cx="8" cy="5.500" rx="2.500" ry="3" fill="#cfe5ef" stroke="#246f97"/>',ef:'<path d="M0 2l3-2 4 1v7l-3 2-4-1z" fill="#3a8bb3" stroke="#245a75" stroke-width=".6"/><path d="M5.500 4.500h5v6h-5z" fill="#eee" stroke="#777"/><path d="M7 7.500h2M8 6.500v2" stroke="#555"/>'};
document.getElementById('tree').insertAdjacentHTML('beforeend',rows.map(([t,i,s,c=''])=>`<li class="d-flex align-items-center position-relative ${c}"><svg class="tw"><use href="#${t}"/></svg><svg class="ic">${own[i]||`<use href="#${i}"/>`}</svg><span>${s}</span></li>`).join(''));
</script>
</body>
</html>
